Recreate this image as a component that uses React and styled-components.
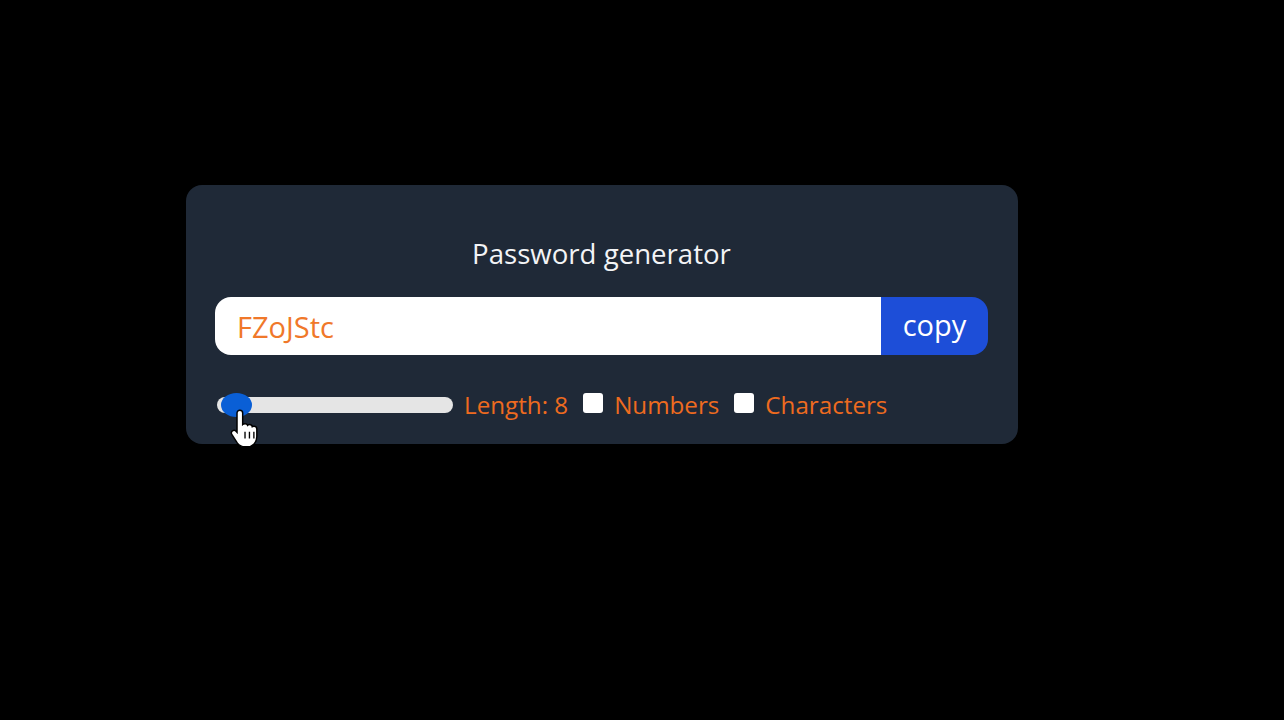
import styled, { createGlobalStyle } from "styled-components";
import { useState } from "react";

const GlobalStyle = createGlobalStyle`
    html, body {
        margin: 0;
        padding: 0;
        background: #000000;
        font-family: "Open Sans", "Noto Sans", sans-serif;
    }
`

const Page = styled.div`
    min-height: 720px;
    padding: 185px 0 0 186px;
    box-sizing: border-box;
`

const Card = styled.div`
    width: 832px;
    box-sizing: border-box;
    background-color: #1f2937;
    border-radius: 16px;
    padding: 50px 30px 24px 29px;
    display: flex;
    flex-direction: column;
`

const Title = styled.h1`
    margin: 0 0 25px;
    text-align: center;
    color: #f3f4f6;
    font-size: 27.6px;
    font-weight: 400;
    line-height: 37px;
`

const InputRow = styled.div`
    display: flex;
    height: 58px;
    border-radius: 16px;
    overflow: hidden;
`

const PasswordField = styled.input`
    flex: 1;
    border: none;
    outline: none;
    padding: 0 22px;
    font-family: inherit;
    font-size: 29px;
    color: #f0782a;
    background: #ffffff;
`

const CopyButton = styled.button`
    width: 107px;
    border: none;
    background-color: #1d4ed8;
    color: #ffffff;
    font-family: inherit;
    font-size: 29px;
    padding: 0 0 4px;
    cursor: pointer;
`

const Options = styled.div`
    display: flex;
    align-items: center;
    gap: 15px;
    margin-top: 35px;
    height: 30px;
`

const Option = styled.div`
    display: flex;
    align-items: center;
    gap: 11px;
`

const SliderWrap = styled.div`
    position: relative;
    display: flex;
    align-items: center;
    margin-left: 2px;
`

const Slider = styled.input`
    -webkit-appearance: none;
    appearance: none;
    width: 236px;
    height: 16px;
    margin: 0;
    border-radius: 8px;
    background: #e5e5e5;
    outline: none;

    &::-webkit-slider-thumb {
        -webkit-appearance: none;
        width: 31px;
        height: 24px;
        border-radius: 50%;
        background: #0a5fd6;
        border: none;
    }
`

const Cursor = styled.svg`
    position: absolute;
    left: 13px;
    top: 10px;
    pointer-events: none;
`

const Label = styled.label`
    color: #ee6b1f;
    font-size: 24.2px;
    line-height: 30px;
`

const Check = styled.input`
    -webkit-appearance: none;
    appearance: none;
    width: 20px;
    height: 20px;
    margin: 0;
    background: #ffffff;
    border-radius: 3px;
    position: relative;
    top: -2px;
`

const App = () => {
    const [length, setLength] = useState(8);
    const [numbers, setNumbers] = useState(false);
    const [chars, setChars] = useState(false);

    return (
        <Page>
            <GlobalStyle />
            <Card>
                <Title>Password generator</Title>
                <InputRow>
                    <PasswordField type="text" value="FZoJStc" readOnly />
                    <CopyButton>copy</CopyButton>
                </InputRow>
                <Options>
                    <Option>
                        <SliderWrap>
                            <Slider
                                type="range"
                                min={6}
                                max={100}
                                value={length}
                                onChange={(e) => setLength(e.target.value)}
                            />
                            <Cursor width="32" height="42" viewBox="0 0 26 34">
                                <path
                                    d="M8 2.5c1.3 0 2.3 1 2.3 2.3v9.4c.5-.5 1.2-.7 1.9-.7 1 0 1.8.5 2.1 1.3.4-.4 1-.6 1.6-.6 1.1 0 2 .7 2.2 1.7.4-.3.9-.4 1.4-.4 1.3 0 2.3 1 2.3 2.3v6.2c0 4.7-3.3 8.3-8 8.3h-1.6c-2.6 0-4.6-1-6.2-3L1.6 22.4c-.8-1-.6-2.4.4-3.1.9-.6 2.1-.5 2.9.3l.8.9V4.8C5.7 3.5 6.7 2.5 8 2.5z"
                                    fill="#ffffff"
                                    stroke="#000000"
                                    strokeWidth="1.2"
                                />
                                <path d="M12.2 20v5.5M15.8 20v5.5M19.4 20v5.5" stroke="#000000" strokeWidth="1.1" />
                            </Cursor>
                        </SliderWrap>
                        <Label>Length: {length}</Label>
                    </Option>
                    <Option>
                        <Check type="checkbox" checked={numbers} onChange={() => setNumbers(!numbers)} />
                        <Label>Numbers</Label>
                    </Option>
                    <Option>
                        <Check type="checkbox" checked={chars} onChange={() => setChars(!chars)} />
                        <Label>Characters</Label>
                    </Option>
                </Options>
            </Card>
        </Page>
    )
}

export default App;
